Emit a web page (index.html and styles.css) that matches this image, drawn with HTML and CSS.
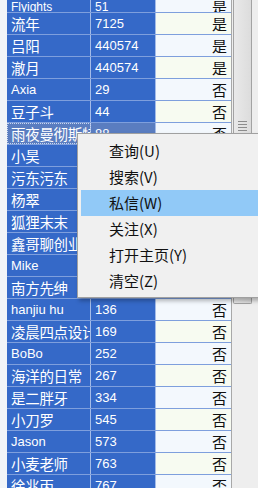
FILE: index.html
```html
<!DOCTYPE html>
<html>
<head>
<meta charset="utf-8">
<link rel="stylesheet" href="styles.css">
</head>
<body>
<div class="screen">
  <div class="gutter"></div>
  <div class="table">
    <div class="row first"><div class="c1">Flyights</div><div class="c2">51</div><div class="c3">是</div></div>
    <div class="row"><div class="c1 zh">流年</div><div class="c2">7125</div><div class="c3">是</div></div>
    <div class="row"><div class="c1 zh">吕阳</div><div class="c2">440574</div><div class="c3">是</div></div>
    <div class="row"><div class="c1 zh">澈月</div><div class="c2">440574</div><div class="c3">是</div></div>
    <div class="row"><div class="c1">Axia</div><div class="c2">29</div><div class="c3">否</div></div>
    <div class="row"><div class="c1 zh">豆子斗</div><div class="c2">44</div><div class="c3">否</div></div>
    <div class="row focus"><div class="c1 zh">雨夜曼彻斯特</div><div class="c2">88</div><div class="c3">否</div></div>
    <div class="row"><div class="c1 zh">小昊</div><div class="c2">90</div><div class="c3">否</div></div>
    <div class="row"><div class="c1 zh">污东污东</div><div class="c2">95</div><div class="c3">否</div></div>
    <div class="row"><div class="c1 zh">杨翠</div><div class="c2">101</div><div class="c3">否</div></div>
    <div class="row"><div class="c1 zh">狐狸末末</div><div class="c2">108</div><div class="c3">否</div></div>
    <div class="row"><div class="c1 zh">鑫哥聊创业</div><div class="c2">112</div><div class="c3">否</div></div>
    <div class="row"><div class="c1">Mike</div><div class="c2">120</div><div class="c3">否</div></div>
    <div class="row"><div class="c1 zh">南方先绅</div><div class="c2">128</div><div class="c3">否</div></div>
    <div class="row"><div class="c1">hanjiu hu</div><div class="c2">136</div><div class="c3">否</div></div>
    <div class="row"><div class="c1 zh">凌晨四点设计</div><div class="c2">169</div><div class="c3">否</div></div>
    <div class="row"><div class="c1">BoBo</div><div class="c2">252</div><div class="c3">否</div></div>
    <div class="row"><div class="c1 zh">海洋的日常</div><div class="c2">267</div><div class="c3">否</div></div>
    <div class="row"><div class="c1 zh">是二胖牙</div><div class="c2">334</div><div class="c3">否</div></div>
    <div class="row"><div class="c1 zh">小刀罗</div><div class="c2">545</div><div class="c3">否</div></div>
    <div class="row"><div class="c1">Jason</div><div class="c2">573</div><div class="c3">否</div></div>
    <div class="row"><div class="c1 zh">小麦老师</div><div class="c2">763</div><div class="c3">否</div></div>
    <div class="row"><div class="c1 zh">徐兆丙</div><div class="c2">767</div><div class="c3">否</div></div>
  </div>
  <div class="scroll">
    <div class="thumb"><div class="grip"><i></i><i></i><i></i><i></i></div></div>
    <div class="track"></div>
  </div>
  <div class="menu">
    <div class="item">查询(U)</div>
    <div class="item">搜索(V)</div>
    <div class="item hot">私信(W)</div>
    <div class="item">关注(X)</div>
    <div class="item">打开主页(Y)</div>
    <div class="item">清空(Z)</div>
  </div>
</div>
</body>
</html>
```

FILE: styles.css
```css
html, body {
  margin: 0;
  padding: 0;
  background: #f3f5f8;
}
.screen {
  position: relative;
  width: 258px;
  height: 488px;
  overflow: hidden;
  display: flex;
  font-family: "Liberation Sans", "Noto Sans CJK SC", sans-serif;
}
.gutter {
  width: 7px;
  flex: none;
  background: #f1f4f8;
}
.table {
  width: 224px;
  flex: none;
  display: flex;
  flex-direction: column;
}
.row {
  display: flex;
  height: 21px;
  border-bottom: 1px solid #7e9fdd;
  flex: none;
}
.row.first {
  height: 12px;
}
.row.first > div {
  line-height: 14px;
}
.row.first > .c1, .row.first > .c2 {
  font-size: 12px;
}
.c1, .c2 {
  background: #3569c8;
  color: #fff;
  font-size: 13px;
  line-height: 21px;
  white-space: nowrap;
  overflow: hidden;
  border-right: 1px solid #a4bce8;
}
.c1 {
  width: 79px;
  padding-left: 4px;
}
.c1.zh {
  font-family: "Noto Sans CJK SC", sans-serif;
  font-size: 14.5px;
  letter-spacing: -0.3px;
}
.c2 {
  width: 60px;
  padding-left: 4px;
}
.c3 {
  width: 71px;
  padding-right: 4px;
  text-align: right;
  font-family: "Noto Sans CJK SC", sans-serif;
  font-size: 15px;
  line-height: 21px;
  color: #111;
  background: #f3f8fd;
  overflow: hidden;
}
.row:nth-child(even) .c3 {
  background: #f7fbf1;
}
.focus .c1, .focus .c2 {
  background: #5a7dc0;
}
.focus .c1 {
  outline: 1px dotted #c9d6ee;
  outline-offset: -1px;
}
.scroll {
  width: 26px;
  flex: none;
  border-left: 1px solid #a8a8a8;
  background: #eeeeee;
  display: flex;
  flex-direction: column;
}
.thumb {
  width: 17px;
  height: 303px;
  margin-left: 1px;
  background: linear-gradient(to right, #e9e9e9, #dcdcdc);
  border: 1px solid #a3a3a3;
  border-top: none;
  border-radius: 0 0 2px 2px;
  flex: none;
  display: flex;
  justify-content: center;
}
.grip {
  margin-top: 121px;
  width: 9px;
  display: flex;
  flex-direction: column;
  gap: 2px;
}
.grip i {
  display: block;
  height: 1px;
  background: #8c8c8c;
}
.track {
  flex: 1;
}
.menu {
  position: absolute;
  left: 77px;
  top: 133px;
  width: 190px;
  height: 155px;
  padding: 4px 0;
  background: #f0f0f0;
  border: 1px solid #a0a0a0;
  box-shadow: 2px 3px 4px rgba(0, 0, 0, 0.28);
  font-family: "Noto Sans CJK SC", sans-serif;
  font-size: 15px;
  color: #111;
}
.item {
  height: 26px;
  line-height: 26px;
  padding-left: 28px;
  margin-left: 3px;
  white-space: nowrap;
}
.item.hot {
  background: #91c9f7;
}
```
